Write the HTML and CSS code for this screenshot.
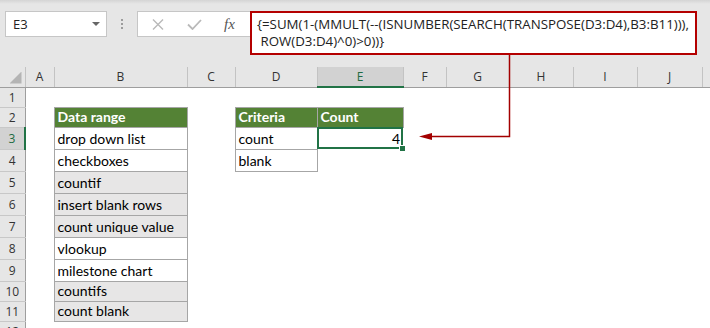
FILE: index.html
```html
<!DOCTYPE html>
<html>
<head>
  <title>Count cells containing criteria - Excel</title>
  <link rel="stylesheet" href="styles.css">
</head>
<body>
  <div class="ribbon">
    <div class="namebox">
      <span>E3</span>
      <span class="caret"></span>
    </div>
    <div class="grip"><i></i><i></i><i></i></div>
    <div class="fbar">
      <div class="fbtns">
        <svg width="12" height="11" viewBox="0 0 12 11"><path d="M1 0.5 L11 10.5 M11 0.5 L1 10.5" stroke="#b9b9b9" stroke-width="1.4" fill="none"/></svg>
        <svg width="15" height="11" viewBox="0 0 15 11"><path d="M1 5.5 L5.5 10 L14 1" stroke="#b9b9b9" stroke-width="1.8" fill="none"/></svg>
        <span class="fx">fx</span>
      </div>
      <div class="formula">{=SUM(1-(MMULT(--(ISNUMBER(SEARCH(TRANSPOSE(D3:D4),B3:B11))),<br>&nbsp;ROW(D3:D4)^0)&gt;0))}</div>
    </div>
  </div>

  <table class="sheet">
    <colgroup>
      <col class="c-rh"><col class="c-a"><col class="c-b"><col class="c-c"><col class="c-d"><col class="c-e">
      <col class="c-f"><col class="c-g"><col class="c-h"><col class="c-i"><col class="c-j"><col class="c-k">
    </colgroup>
    <tr class="colhead">
      <th class="corner"></th><th>A</th><th>B</th><th>C</th><th>D</th><th class="active">E</th>
      <th>F</th><th>G</th><th>H</th><th>I</th><th>J</th><th></th>
    </tr>
    <tr class="r20">
      <th class="rh">1</th><td></td><td></td><td></td><td></td><td></td><td></td><td></td><td></td><td></td><td></td><td></td>
    </tr>
    <tr class="r20">
      <th class="rh">2</th><td></td><td class="hd">Data range</td><td></td><td class="hd">Criteria</td><td class="hd">Count</td><td></td><td></td><td></td><td></td><td></td><td></td>
    </tr>
    <tr class="r22">
      <th class="rh active">3</th><td></td><td class="w">drop down list</td><td></td><td class="w">count</td>
      <td class="num"><span class="sel"></span>4</td><td></td><td></td><td></td><td></td><td></td><td></td>
    </tr>
    <tr class="r22">
      <th class="rh">4</th><td></td><td class="w">checkboxes</td><td></td><td class="w">blank</td><td></td><td></td><td></td><td></td><td></td><td></td><td></td>
    </tr>
    <tr class="r22">
      <th class="rh">5</th><td></td><td class="g">countif</td><td></td><td></td><td></td><td></td><td></td><td></td><td></td><td></td><td></td>
    </tr>
    <tr class="r22">
      <th class="rh">6</th><td></td><td class="g">insert blank rows</td><td></td><td></td><td></td><td></td><td></td><td></td><td></td><td></td><td></td>
    </tr>
    <tr class="r22">
      <th class="rh">7</th><td></td><td class="g">count unique value</td><td></td><td></td><td></td><td></td><td></td><td></td><td></td><td></td><td></td>
    </tr>
    <tr class="r22">
      <th class="rh">8</th><td></td><td class="w">vlookup</td><td></td><td></td><td></td><td></td><td></td><td></td><td></td><td></td><td></td>
    </tr>
    <tr class="r22">
      <th class="rh">9</th><td></td><td class="w">milestone chart</td><td></td><td></td><td></td><td></td><td></td><td></td><td></td><td></td><td></td>
    </tr>
    <tr class="r20">
      <th class="rh">10</th><td></td><td class="g">countifs</td><td></td><td></td><td></td><td></td><td></td><td></td><td></td><td></td><td></td>
    </tr>
    <tr class="r20">
      <th class="rh">11</th><td></td><td class="g">count blank</td><td></td><td></td><td></td><td></td><td></td><td></td><td></td><td></td><td></td>
    </tr>
    <tr class="r20">
      <th class="rh">12</th><td></td><td></td><td></td><td></td><td></td><td></td><td></td><td></td><td></td><td></td><td></td>
    </tr>
  </table>

  <!-- callout from the formula to the result cell -->
  <svg class="callout" width="710" height="328" viewBox="0 0 710 328">
    <path d="M509.5 55 V136.5 H428" stroke="#a30000" stroke-width="1.5" fill="none"/>
    <polygon points="419,136.5 432,133 432,140" fill="#a30000"/>
  </svg>
</body>
</html>
```

FILE: styles.css
```css
body {
  margin: 0;
  width: 710px;
  height: 328px;
  overflow: hidden;
  background: #fff;
  position: relative;
  font-family: Lato, "Liberation Sans", sans-serif;
}

/* formula bar area */
.ribbon {
  height: 67px;
  box-sizing: border-box;
  padding-top: 11px;
  display: flex;
  align-items: flex-start;
  background: linear-gradient(#d4d4d4, #e6e6e6 4px);
}
.namebox {
  margin-left: 5px;
  width: 102px;
  height: 26px;
  box-sizing: border-box;
  border: 1px solid #c6c6c6;
  background: #fff;
  display: flex;
  align-items: center;
  justify-content: space-between;
  padding: 0 6px 0 7px;
  font-family: "Open Sans", sans-serif;
  font-size: 13px;
  color: #222;
}
.caret {
  width: 0;
  height: 0;
  border-left: 4px solid transparent;
  border-right: 4px solid transparent;
  border-top: 4px solid #666;
}
.grip {
  width: 30px;
  display: flex;
  flex-direction: column;
  align-items: center;
  gap: 2px;
  padding-top: 8px;
}
.grip i {
  width: 2px;
  height: 2px;
  background: #9c9c9c;
}
.fbar {
  display: flex;
  align-items: flex-start;
}
.fbtns {
  width: 113px;
  height: 26px;
  box-sizing: border-box;
  border: 1px solid #c6c6c6;
  border-right: none;
  background: #fff;
  display: flex;
  align-items: center;
  padding-left: 14px;
  gap: 23px;
}
.fx {
  font-family: "Liberation Serif", serif;
  font-style: italic;
  font-size: 15px;
  color: #555;
  margin-left: -1px;
}
.formula {
  width: 447px;
  height: 44px;
  box-sizing: border-box;
  border: 2px solid #b40000;
  background: #fff;
  padding: 3px 0 0 5px;
  font-family: "Open Sans", sans-serif;
  font-size: 13.3px;
  line-height: 17px;
  color: #222;
  white-space: nowrap;
}

/* grid */
.sheet {
  border-collapse: collapse;
  table-layout: fixed;
  width: 710px;
}
.c-rh { width: 25px; }
.c-a { width: 29px; }
.c-b { width: 133px; }
.c-c { width: 48px; }
.c-d { width: 82px; }
.c-e { width: 86px; }
.c-f { width: 43px; }
.c-g { width: 63px; }
.c-h { width: 64px; }
.c-i { width: 64px; }
.c-j { width: 65px; }
.c-k { width: 8px; }

.sheet th,
.sheet td {
  padding: 0;
  overflow: hidden;
  white-space: nowrap;
}
.colhead th {
  height: 19px;
  background: #e6e6e6;
  border-right: 1px solid #c3c3c3;
  border-bottom: 1px solid #9e9e9e;
  font-family: "Open Sans", sans-serif;
  font-weight: normal;
  font-size: 12px;
  color: #333;
  text-align: center;
}
.colhead th.active {
  background: #d2d2d2;
  color: #1e6b41;
  border-bottom: 2px solid #217346;
}
.corner {
  position: relative;
}
.corner::after {
  content: "";
  position: absolute;
  right: 3px;
  bottom: 3px;
  width: 12px;
  height: 12px;
  background: #b4b4b4;
  clip-path: polygon(100% 0, 100% 100%, 0 100%);
}
.r20 { height: 20px; }
.r22 { height: 22px; }
.rh {
  background: #e6e6e6;
  border-right: 1px solid #9e9e9e;
  border-bottom: 1px solid #c8c8c8;
  font-family: "Open Sans", sans-serif;
  font-weight: normal;
  font-size: 12px;
  color: #333;
  text-align: center;
}
.rh.active {
  background: #d2d2d2;
  color: #1e6b41;
  border-right: 2px solid #217346;
}

.sheet td {
  font-size: 14px;
  color: #000;
  vertical-align: bottom;
  line-height: 18px;
  padding: 0 3px 1px;
}
.hd {
  background: #548235;
  color: #fff !important;
  font-weight: bold;
  border: 1px solid #a6a6a6;
}
.w {
  background: #fff;
  border: 1px solid #a6a6a6;
}
.g {
  background: #e7e6e6;
  border: 1px solid #a6a6a6;
}
.sheet td.num {
  position: relative;
  overflow: visible;
  text-align: right;
}
.sel {
  position: absolute;
  left: -1px;
  top: -1px;
  right: 0;
  bottom: 0;
  border: 2px solid #217346;
}
.sel::after {
  content: "";
  position: absolute;
  right: -5px;
  bottom: -5px;
  width: 5px;
  height: 5px;
  background: #217346;
  border: 1px solid #fff;
  z-index: 1;
}

.callout {
  position: absolute;
  left: 0;
  top: 0;
  pointer-events: none;
}
```
